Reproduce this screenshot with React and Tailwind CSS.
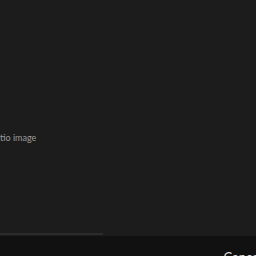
import React from 'react';

export default function App() {
  return (
    <div className="w-[256px] h-[256px] overflow-hidden bg-[#1c1c1c] flex flex-col font-['Lato',sans-serif]">
      <div className="flex-1 flex flex-col">
        <div className="pt-[132px] -ml-[10px] text-[9px] leading-[12px] text-[#9a9a9a] whitespace-nowrap">
          Ratio image
        </div>
        <div className="mt-auto mb-[1px] h-[2px] w-[103px] bg-[#2b2b2b]" />
      </div>
      <div className="h-[20px] bg-[#111111] flex justify-end items-start">
        <span className="mt-[13px] -mr-[6px] text-[13px] leading-[16px] text-[#dcdcdc] whitespace-nowrap">
          Cancel
        </span>
      </div>
    </div>
  );
}
